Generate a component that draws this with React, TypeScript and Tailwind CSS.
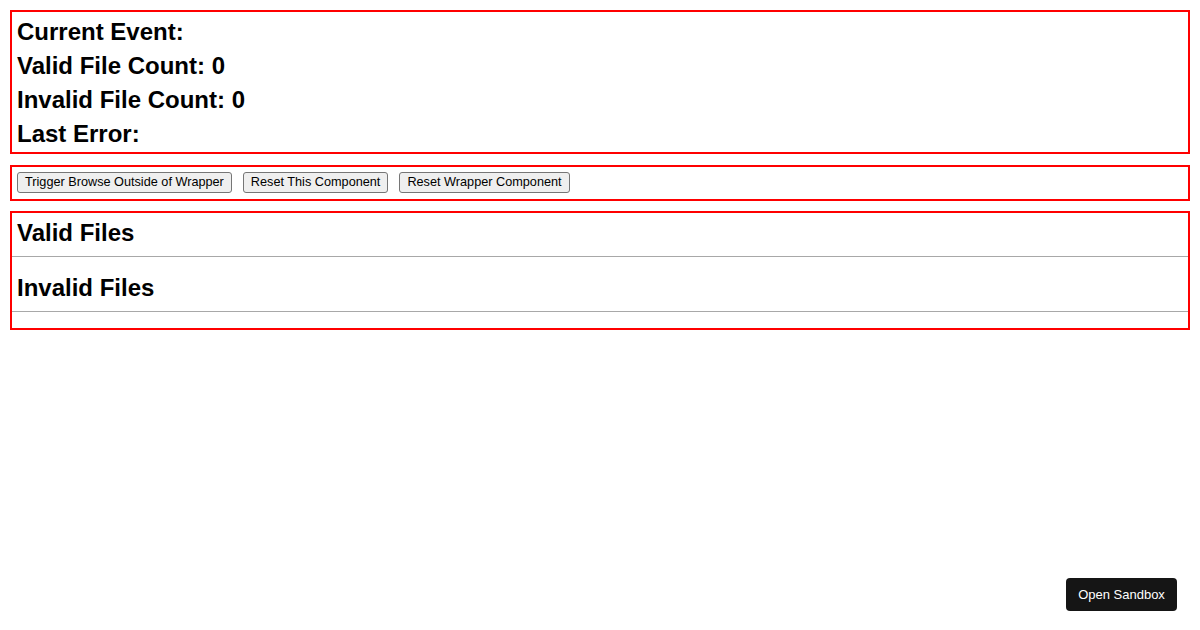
const font = { fontFamily: '"Liberation Sans", Arial, sans-serif' };

function StatLine({ label, value }: { label: string; value?: string | number }) {
  return (
    <div className="text-[24px] font-bold leading-[34px] text-black">
      {label}
      {value !== undefined ? ` ${value}` : ''}
    </div>
  );
}

function LegacyButton({ children }: { children: string }) {
  return (
    <button className="h-[21px] rounded-[3px] border border-[#767676] bg-[#efefef] px-[7px] text-[12.7px] leading-[15px] text-black">
      {children}
    </button>
  );
}

export default function App() {
  const validFiles: string[] = [];
  const invalidFiles: string[] = [];

  return (
    <div className="relative min-h-[630px] bg-white p-[10px]" style={font}>
      {/* Status */}
      <div className="border-2 border-[#ff0000] px-[5px] pb-[1px] pt-[3px]">
        <StatLine label="Current Event:" />
        <StatLine label="Valid File Count:" value={validFiles.length} />
        <StatLine label="Invalid File Count:" value={invalidFiles.length} />
        <StatLine label="Last Error:" />
      </div>

      {/* Actions */}
      <div className="mt-[11px] flex gap-[11px] border-2 border-[#ff0000] pb-[6px] pl-[5px] pt-[5px]">
        <LegacyButton>Trigger Browse Outside of Wrapper</LegacyButton>
        <LegacyButton>Reset This Component</LegacyButton>
        <LegacyButton>Reset Wrapper Component</LegacyButton>
      </div>

      {/* File lists */}
      <div className="mt-[10px] border-2 border-[#ff0000] pb-[16px] pt-[6px]">
        <div className="px-[5px] text-[24px] font-bold leading-[28px] text-black">Valid Files</div>
        <div className="mb-[17px] mt-[9px] h-px bg-[#a8a8a8]" />
        <div className="px-[5px] text-[24px] font-bold leading-[28px] text-black">Invalid Files</div>
        <div className="mt-[9px] h-px bg-[#a8a8a8]" />
      </div>

      {/* Sandbox overlay */}
      <button className="absolute bottom-[19px] right-[23px] h-[33px] w-[111px] rounded-[4px] bg-[#151515] text-[13px] text-white">
        Open Sandbox
      </button>
    </div>
  );
}
